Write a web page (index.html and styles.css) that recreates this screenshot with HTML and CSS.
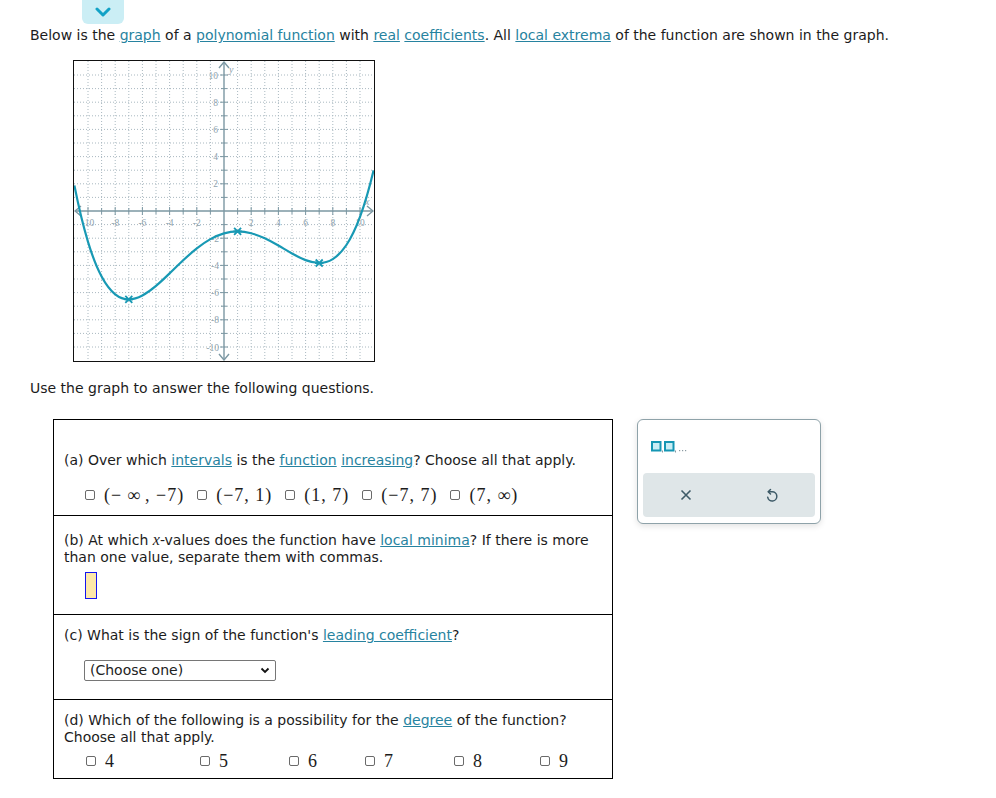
FILE: index.html
```html
<!DOCTYPE html>
<html lang="en">
<head>
<meta charset="utf-8">
<title>Polynomial graph questions</title>
<link rel="stylesheet" href="styles.css">
</head>
<body>
<div class="page">
  <div class="tab">
    <svg width="16" height="10" viewBox="0 0 16 10"><path d="M2 2L8 8L14 2" fill="none" stroke="#12a2c6" stroke-width="3" stroke-linecap="round" stroke-linejoin="round"/></svg>
  </div>
  <p class="intro">Below is the <a href="#">graph</a> of a <a href="#">polynomial function</a> with <a href="#">real</a> <a href="#">coefficients</a>. All <a href="#">local extrema</a> of the function are shown in the graph.</p>

  <div class="graph">
    <svg width="300" height="300" viewBox="0 0 300 300">
      <path class="grid" d="M14 0V300M27.6 0V300M41.2 0V300M54.8 0V300M68.4 0V300M82 0V300M95.6 0V300M109.2 0V300M122.8 0V300M136.4 0V300M163.6 0V300M177.2 0V300M190.8 0V300M204.4 0V300M218 0V300M231.6 0V300M245.2 0V300M258.8 0V300M272.4 0V300M286 0V300M0 14H300M0 27.6H300M0 41.2H300M0 54.8H300M0 68.4H300M0 82H300M0 95.6H300M0 109.2H300M0 122.8H300M0 136.4H300M0 163.6H300M0 177.2H300M0 190.8H300M0 204.4H300M0 218H300M0 231.6H300M0 245.2H300M0 258.8H300M0 272.4H300M0 286H300"/>
      <path class="axis" d="M1 150H299M150 1V299"/>
      <path class="axis" d="M293 145L299 150L293 155M7 145L1 150L7 155M145 7L150 1L155 7M145 293L150 299L155 293"/>
      <path class="tick" d="M14 146V154M27.6 147V153M41.2 146V154M54.8 147V153M68.4 146V154M82 147V153M95.6 146V154M109.2 147V153M122.8 146V154M136.4 147V153M163.6 147V153M177.2 146V154M190.8 147V153M204.4 146V154M218 147V153M231.6 146V154M245.2 147V153M258.8 146V154M272.4 147V153M286 146V154M146 14H154M147 27.6H153M146 41.2H154M147 54.8H153M146 68.4H154M147 82H153M146 95.6H154M147 109.2H153M146 122.8H154M147 136.4H153M147 163.6H153M146 177.2H154M147 190.8H153M146 204.4H154M147 218H153M146 231.6H154M147 245.2H153M146 258.8H154M147 272.4H153M146 286H154"/>
      <g class="lbl">
        <text x="14" y="165" text-anchor="middle">-10</text>
        <text x="41.2" y="165" text-anchor="middle">-8</text>
        <text x="68.4" y="165" text-anchor="middle">-6</text>
        <text x="95.6" y="165" text-anchor="middle">-4</text>
        <text x="122.8" y="165" text-anchor="middle">-2</text>
        <text x="177.2" y="165" text-anchor="middle">2</text>
        <text x="204.4" y="165" text-anchor="middle">4</text>
        <text x="231.6" y="165" text-anchor="middle">6</text>
        <text x="258.8" y="165" text-anchor="middle">8</text>
        <text x="286" y="165" text-anchor="middle">10</text>
        <text x="144" y="17.5" text-anchor="end">10</text>
        <text x="144" y="44.7" text-anchor="end">8</text>
        <text x="144" y="71.9" text-anchor="end">6</text>
        <text x="144" y="99.1" text-anchor="end">4</text>
        <text x="144" y="126.3" text-anchor="end">2</text>
        <text x="145" y="180.7" text-anchor="end">-2</text>
        <text x="145" y="207.9" text-anchor="end">-4</text>
        <text x="145" y="235.1" text-anchor="end">-6</text>
        <text x="145" y="262.3" text-anchor="end">-8</text>
        <text x="145" y="289.5" text-anchor="end">-10</text>
        <text class="var" x="155" y="12">y</text>
        <text class="var" x="291" y="144">x</text>
      </g>
      <g transform="translate(150 150) scale(13.6 -13.6)">
        <path class="curve" d="M-11 1.875C-10.667 0.188 -10.333 -1.172 -10 -2.268C-9.667 -3.364 -9.333 -4.195 -9 -4.82C-8.667 -5.445 -8.333 -5.863 -8 -6.127C-7.667 -6.391 -7.333 -6.5 -7 -6.5C-6.667 -6.5 -6.333 -6.391 -6 -6.213C-5.667 -6.035 -5.333 -5.789 -5 -5.508C-4.667 -5.227 -4.333 -4.91 -4 -4.588C-3.667 -4.266 -3.333 -3.937 -3 -3.625C-2.667 -3.313 -2.333 -3.016 -2 -2.752C-1.667 -2.488 -1.333 -2.257 -1 -2.07C-0.667 -1.883 -0.333 -1.739 0 -1.643C0.333 -1.547 0.667 -1.5 1 -1.5C1.333 -1.5 1.667 -1.547 2 -1.635C2.333 -1.723 2.667 -1.852 3 -2.008C3.333 -2.164 3.667 -2.348 4 -2.541C4.333 -2.734 4.667 -2.938 5 -3.125C5.333 -3.312 5.667 -3.485 6 -3.612C6.333 -3.739 6.667 -3.82 7 -3.82C7.333 -3.82 7.667 -3.739 8 -3.534C8.333 -3.329 8.667 -3 9 -2.5C9.333 -2 9.667 -1.328 10 -0.432C10.333 0.464 10.667 1.586 11 2.992"/>
      </g>
      <path class="mark" d="M51.3 234.9L58.3 241.9M58.3 234.9L51.3 241.9M50.6 238.4H59M160.1 166.9L167.1 173.9M167.1 166.9L160.1 173.9M159.4 170.4H167.8M241.7 198.5L248.7 205.5M248.7 198.5L241.7 205.5M241 202H249.4"/>
    </svg>
  </div>

  <p class="use">Use the graph to answer the following questions.</p>

  <div class="row">
    <div class="qbox">
      <div class="q qa">
        <p>(a) Over which <a href="#">intervals</a> is the <a href="#">function</a> <a href="#">increasing</a>? Choose all that apply.</p>
        <div class="opts">
          <label class="opt"><span class="cb"></span><span class="math">(−<span class="inf1">∞</span>, −7)</span></label>
          <label class="opt"><span class="cb"></span><span class="math">(−7, 1)</span></label>
          <label class="opt"><span class="cb"></span><span class="math">(1, 7)</span></label>
          <label class="opt"><span class="cb"></span><span class="math">(−7, 7)</span></label>
          <label class="opt"><span class="cb"></span><span class="math">(7, ∞)</span></label>
        </div>
      </div>
      <div class="q qb">
        <p>(b) At which <i class="mvar">x</i>-values does the function have <a href="#">local minima</a>? If there is more than one value, separate them with commas.</p>
        <div class="answer"></div>
      </div>
      <div class="q qc">
        <p>(c) What is the sign of the function's <a href="#">leading coefficient</a>?</p>
        <div class="select"><span>(Choose one)</span><svg width="10" height="7" viewBox="0 0 10 7"><path d="M1.5 1.5L5 5L8.5 1.5" fill="none" stroke="#111" stroke-width="1.8"/></svg></div>
      </div>
      <div class="q qd">
        <p>(d) Which of the following is a possibility for the <a href="#">degree</a> of the function? Choose all that apply.</p>
        <div class="degs">
          <label class="opt"><span class="cb"></span><span class="math">4</span></label>
          <label class="opt"><span class="cb"></span><span class="math">5</span></label>
          <label class="opt"><span class="cb"></span><span class="math">6</span></label>
          <label class="opt"><span class="cb"></span><span class="math">7</span></label>
          <label class="opt"><span class="cb"></span><span class="math">8</span></label>
          <label class="opt"><span class="cb"></span><span class="math">9</span></label>
        </div>
      </div>
    </div>

    <div class="panel">
      <div class="palette">
        <svg width="40" height="12" viewBox="0 0 40 12">
          <rect x="1" y="1" width="8.5" height="8.5" fill="#c9eef5" stroke="#1596b3" stroke-width="2"/>
          <rect x="14" y="1" width="8.5" height="8.5" fill="#c9eef5" stroke="#1596b3" stroke-width="2"/>
          <rect x="11" y="9.5" width="1" height="2" fill="#8a9aa2"/>
          <rect x="24" y="9.5" width="1" height="2" fill="#8a9aa2"/>
          <rect x="28" y="9" width="1.2" height="1.2" fill="#8a9aa2"/>
          <rect x="31" y="9" width="1.2" height="1.2" fill="#8a9aa2"/>
          <rect x="34" y="9" width="1.2" height="1.2" fill="#8a9aa2"/>
        </svg>
      </div>
      <div class="btns">
        <div class="btn"><svg width="12" height="12" viewBox="0 0 12 12"><path d="M1.5 1.5L10.5 10.5M10.5 1.5L1.5 10.5" fill="none" stroke="#3e5b68" stroke-width="1.6"/></svg></div>
        <div class="btn"><svg width="14" height="15" viewBox="0 0 14 15"><path d="M5.5 1.5L3.2 3.8L5.5 6" fill="none" stroke="#3e5b68" stroke-width="1.5" stroke-linejoin="round" stroke-linecap="round"/><path d="M3.5 3.8H7.2A4.6 4.6 0 1 1 2.7 9.2" fill="none" stroke="#3e5b68" stroke-width="1.5" stroke-linecap="round"/></svg></div>
      </div>
    </div>
  </div>
</div>
</body>
</html>
```
FILE: styles.css
```css
body {
  margin: 0;
  background: #ffffff;
  color: #1c1c1c;
  font-family: "DejaVu Sans", Verdana, sans-serif;
  font-size: 14px;
  line-height: 17px;
}

p {
  margin: 0;
}

a {
  color: #2783a0;
  text-decoration: underline;
}

.page {
  padding-left: 30px;
}

.tab {
  margin-left: 52px;
  width: 42px;
  height: 24px;
  background: #cbeef5;
  border-radius: 0 0 6px 6px;
  display: flex;
  align-items: center;
  justify-content: center;
}

.intro {
  margin-top: 2px;
  line-height: 18px;
}

.graph {
  margin: 16px 0 0 43px;
  width: 300px;
  height: 300px;
  border: 1px solid #111111;
}

.graph svg {
  display: block;
}

.grid {
  fill: none;
  stroke: #a9b8c0;
  stroke-width: 1;
  stroke-dasharray: 1 2;
}

.axis {
  fill: none;
  stroke: #7c98a3;
  stroke-width: 1.4;
}

.tick {
  fill: none;
  stroke: #7c98a3;
  stroke-width: 1;
}

.lbl text {
  font-family: "Liberation Serif", "Times New Roman", serif;
  font-size: 9.5px;
  fill: #8ea2ad;
}

.lbl .var {
  font-style: italic;
  font-size: 10px;
}

.curve {
  fill: none;
  stroke: #1899b4;
  stroke-width: 2.2;
  vector-effect: non-scaling-stroke;
}

.mark {
  fill: none;
  stroke: #1899b4;
  stroke-width: 1.8;
}

.use {
  margin-top: 17px;
  line-height: 18px;
}

.row {
  display: flex;
  align-items: flex-start;
  gap: 24px;
  margin: 22px 0 0 23px;
}

.qbox {
  width: 558px;
  border: 1px solid #000000;
}

.q {
  padding: 0 10px;
}

.q + .q {
  border-top: 1px solid #000000;
}

.qa {
  padding-top: 32px;
  padding-bottom: 10px;
}

.qb {
  padding-top: 16px;
  padding-bottom: 15px;
}

.qc {
  padding-top: 12px;
  padding-bottom: 18px;
}

.qd {
  padding-top: 12px;
  padding-bottom: 9px;
}

.opts {
  display: flex;
  align-items: center;
  height: 20px;
  margin-top: 16px;
  padding-left: 21px;
}

.opt {
  display: flex;
  align-items: center;
  gap: 9px;
}

.opts .opt {
  margin-right: 13px;
}

.opts .math {
  letter-spacing: 1px;
}

.cb {
  width: 8px;
  height: 8px;
  border: 1px solid #6a6a6a;
  border-radius: 2px;
  background: #ffffff;
  flex: none;
}

.math {
  font-family: "Liberation Serif", "Times New Roman", serif;
  font-size: 18px;
  line-height: 20px;
  color: #1c1c1c;
  white-space: nowrap;
}

.inf1 {
  margin: 0 4px 0 5px;
}

.mvar {
  font-family: "Liberation Serif", "Times New Roman", serif;
  font-size: 16px;
  line-height: 1;
}

.answer {
  margin: 6px 0 0 21px;
  width: 10px;
  height: 25px;
  background: #fde8a9;
  border: 1px solid #1414f0;
}

.select {
  margin: 16px 0 0 20px;
  width: 180px;
  height: 19px;
  padding: 0 5px 0 5px;
  border: 1px solid #767676;
  border-radius: 2px;
  display: flex;
  align-items: center;
  justify-content: space-between;
  color: #222222;
  font-size: 14px;
}

.degs {
  display: grid;
  grid-template-columns: 114px 89px 76px 89px 86px auto;
  align-items: center;
  height: 18px;
  margin-top: 5px;
  padding-left: 22px;
}

.panel {
  width: 172px;
  height: 103px;
  padding: 0 5px;
  border: 1px solid #8ea2a9;
  border-radius: 6px;
  background: #ffffff;
  box-shadow: 0 2px 6px rgba(0, 0, 0, 0.12);
}

.palette {
  height: 12px;
  padding: 21px 0 0 8px;
}

.palette svg {
  display: block;
}

.btns {
  display: flex;
  height: 44px;
  margin-top: 20px;
  background: #dfe6e8;
  border-radius: 4px;
}

.btn {
  flex: 1;
  display: flex;
  align-items: center;
  justify-content: center;
}
```
